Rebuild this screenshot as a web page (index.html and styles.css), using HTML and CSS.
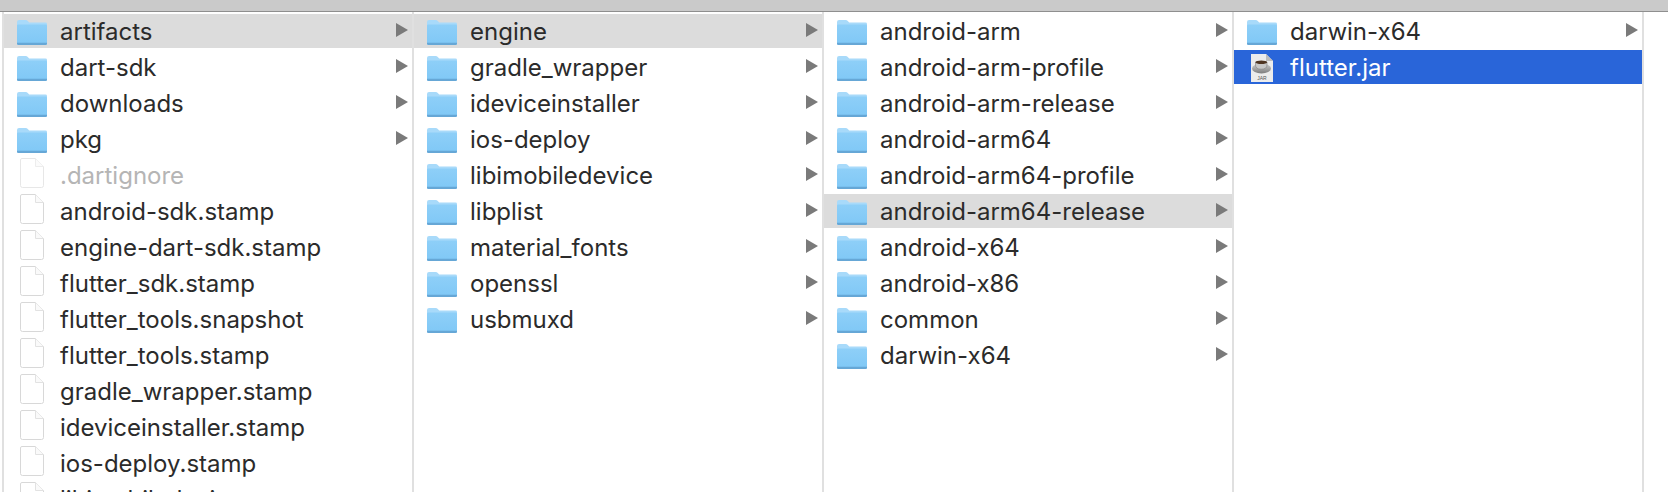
FILE: index.html
```html
<!DOCTYPE html>
<html lang="en">
<head>
<meta charset="utf-8">
<title>Finder columns</title>
<link rel="stylesheet" href="styles.css">
</head>
<body>
<svg class="defs" width="0" height="0" aria-hidden="true">
  <defs>
    <linearGradient id="fb" x1="0" y1="0" x2="0" y2="1">
      <stop offset="0" stop-color="#8ecff8"/>
      <stop offset="1" stop-color="#80c8f6"/>
    </linearGradient>
    <linearGradient id="saucer" x1="0" y1="0" x2="0" y2="1">
      <stop offset="0" stop-color="#cfcfcf"/>
      <stop offset="1" stop-color="#7d7d7d"/>
    </linearGradient>
    <symbol id="folder" viewBox="0 0 30 25">
      <path d="M0 2Q0 0 2 0H8.500Q10 0 11 1.200L12.200 2.600H28.500Q30 2.600 30 4V23.500Q30 25 28.500 25H1.500Q0 25 0 23.500Z" fill="#a8dafa"/>
      <path d="M0 5.500Q0 4.500 1 4.500H29Q30 4.500 30 5.500V23Q30 24 29 24H1Q0 24 0 23Z" fill="url(#fb)"/>
      <path d="M0 22.700V23.500Q0 25 1.500 25H28.500Q30 25 30 23.500V22.700Z" fill="#66a7d6"/>
    </symbol>
    <symbol id="file" viewBox="0 0 24 30">
      <path d="M2 .5H15.500L23.500 8.500V27.500Q23.500 29.500 21.500 29.500H2.500Q.5 29.500 .5 27.500V2Q.5 .5 2 .5Z" fill="#fff" stroke="#d8d8d8"/>
      <path d="M15.500 .5V8.500H23.500" fill="#fafafa" stroke="#e2e2e2"/>
    </symbol>
    <symbol id="jar" viewBox="0 0 22 28">
      <path d="M0 0H15L22 7V28H0Z" fill="#ececec"/>
      <path d="M15 0V7H22Z" fill="#bdbdbd"/>
      <ellipse cx="10.500" cy="14.500" rx="9.500" ry="5" fill="url(#saucer)"/>
      <path d="M4.500 8H16V11Q16 15.200 10.300 15.200Q4.500 15.200 4.500 11Z" fill="#c8c8c8" stroke="#7f7f7f" stroke-width=".6"/>
      <ellipse cx="10.300" cy="8.200" rx="5.800" ry="1.700" fill="#4f3522"/>
      <text x="11" y="26" text-anchor="middle" class="jar-label">JAR</text>
    </symbol>
    <symbol id="arrow" viewBox="0 0 12 14">
      <path d="M0 0L12 7L0 14Z" fill="#7a7a7a"/>
    </symbol>
  </defs>
</svg>
<div class="titlebar"></div>
<main class="browser">
  <section class="column">
    <div class="row active"><span class="slot"><svg class="folder"><use href="#folder"/></svg></span><span class="name">artifacts</span><svg class="arrow"><use href="#arrow"/></svg></div>
    <div class="row"><span class="slot"><svg class="folder"><use href="#folder"/></svg></span><span class="name">dart-sdk</span><svg class="arrow"><use href="#arrow"/></svg></div>
    <div class="row"><span class="slot"><svg class="folder"><use href="#folder"/></svg></span><span class="name">downloads</span><svg class="arrow"><use href="#arrow"/></svg></div>
    <div class="row"><span class="slot"><svg class="folder"><use href="#folder"/></svg></span><span class="name">pkg</span><svg class="arrow"><use href="#arrow"/></svg></div>
    <div class="row hidden-file"><span class="slot"><svg class="file"><use href="#file"/></svg></span><span class="name">.dartignore</span></div>
    <div class="row"><span class="slot"><svg class="file"><use href="#file"/></svg></span><span class="name">android-sdk.stamp</span></div>
    <div class="row"><span class="slot"><svg class="file"><use href="#file"/></svg></span><span class="name">engine-dart-sdk.stamp</span></div>
    <div class="row"><span class="slot"><svg class="file"><use href="#file"/></svg></span><span class="name">flutter_sdk.stamp</span></div>
    <div class="row"><span class="slot"><svg class="file"><use href="#file"/></svg></span><span class="name">flutter_tools.snapshot</span></div>
    <div class="row"><span class="slot"><svg class="file"><use href="#file"/></svg></span><span class="name">flutter_tools.stamp</span></div>
    <div class="row"><span class="slot"><svg class="file"><use href="#file"/></svg></span><span class="name">gradle_wrapper.stamp</span></div>
    <div class="row"><span class="slot"><svg class="file"><use href="#file"/></svg></span><span class="name">ideviceinstaller.stamp</span></div>
    <div class="row"><span class="slot"><svg class="file"><use href="#file"/></svg></span><span class="name">ios-deploy.stamp</span></div>
    <div class="row"><span class="slot"><svg class="file"><use href="#file"/></svg></span><span class="name">libimobiledevice.stamp</span></div>
  </section>
  <section class="column">
    <div class="row active"><span class="slot"><svg class="folder"><use href="#folder"/></svg></span><span class="name">engine</span><svg class="arrow"><use href="#arrow"/></svg></div>
    <div class="row"><span class="slot"><svg class="folder"><use href="#folder"/></svg></span><span class="name">gradle_wrapper</span><svg class="arrow"><use href="#arrow"/></svg></div>
    <div class="row"><span class="slot"><svg class="folder"><use href="#folder"/></svg></span><span class="name">ideviceinstaller</span><svg class="arrow"><use href="#arrow"/></svg></div>
    <div class="row"><span class="slot"><svg class="folder"><use href="#folder"/></svg></span><span class="name">ios-deploy</span><svg class="arrow"><use href="#arrow"/></svg></div>
    <div class="row"><span class="slot"><svg class="folder"><use href="#folder"/></svg></span><span class="name">libimobiledevice</span><svg class="arrow"><use href="#arrow"/></svg></div>
    <div class="row"><span class="slot"><svg class="folder"><use href="#folder"/></svg></span><span class="name">libplist</span><svg class="arrow"><use href="#arrow"/></svg></div>
    <div class="row"><span class="slot"><svg class="folder"><use href="#folder"/></svg></span><span class="name">material_fonts</span><svg class="arrow"><use href="#arrow"/></svg></div>
    <div class="row"><span class="slot"><svg class="folder"><use href="#folder"/></svg></span><span class="name">openssl</span><svg class="arrow"><use href="#arrow"/></svg></div>
    <div class="row"><span class="slot"><svg class="folder"><use href="#folder"/></svg></span><span class="name">usbmuxd</span><svg class="arrow"><use href="#arrow"/></svg></div>
  </section>
  <section class="column">
    <div class="row"><span class="slot"><svg class="folder"><use href="#folder"/></svg></span><span class="name">android-arm</span><svg class="arrow"><use href="#arrow"/></svg></div>
    <div class="row"><span class="slot"><svg class="folder"><use href="#folder"/></svg></span><span class="name">android-arm-profile</span><svg class="arrow"><use href="#arrow"/></svg></div>
    <div class="row"><span class="slot"><svg class="folder"><use href="#folder"/></svg></span><span class="name">android-arm-release</span><svg class="arrow"><use href="#arrow"/></svg></div>
    <div class="row"><span class="slot"><svg class="folder"><use href="#folder"/></svg></span><span class="name">android-arm64</span><svg class="arrow"><use href="#arrow"/></svg></div>
    <div class="row"><span class="slot"><svg class="folder"><use href="#folder"/></svg></span><span class="name">android-arm64-profile</span><svg class="arrow"><use href="#arrow"/></svg></div>
    <div class="row active"><span class="slot"><svg class="folder"><use href="#folder"/></svg></span><span class="name">android-arm64-release</span><svg class="arrow"><use href="#arrow"/></svg></div>
    <div class="row"><span class="slot"><svg class="folder"><use href="#folder"/></svg></span><span class="name">android-x64</span><svg class="arrow"><use href="#arrow"/></svg></div>
    <div class="row"><span class="slot"><svg class="folder"><use href="#folder"/></svg></span><span class="name">android-x86</span><svg class="arrow"><use href="#arrow"/></svg></div>
    <div class="row"><span class="slot"><svg class="folder"><use href="#folder"/></svg></span><span class="name">common</span><svg class="arrow"><use href="#arrow"/></svg></div>
    <div class="row"><span class="slot"><svg class="folder"><use href="#folder"/></svg></span><span class="name">darwin-x64</span><svg class="arrow"><use href="#arrow"/></svg></div>
  </section>
  <section class="column">
    <div class="row"><span class="slot"><svg class="folder"><use href="#folder"/></svg></span><span class="name">darwin-x64</span><svg class="arrow"><use href="#arrow"/></svg></div>
    <div class="row selected"><span class="slot"><svg class="jar"><use href="#jar"/></svg></span><span class="name">flutter.jar</span></div>
  </section>
</main>
</body>
</html>
```
FILE: styles.css
```css
html, body {
  margin: 0;
  height: 100%;
  overflow: hidden;
  background: #fff;
}
.defs {
  position: absolute;
}
.titlebar {
  height: 11px;
  background: #cacaca;
  border-bottom: 1px solid #8f8f8f;
}
.browser {
  display: flex;
  padding-left: 2px;
  height: 480px;
  overflow: hidden;
  font-family: Inter, "Liberation Sans", sans-serif;
  font-size: 24px;
  color: #2b2b2b;
}
.column {
  flex: none;
  box-sizing: border-box;
  width: 410px;
  padding-top: 2px;
  border-right: 2px solid #e0e0e0;
}
.column:first-child {
  width: 412px;
  border-left: 2px solid #e0e0e0;
}
.row {
  display: flex;
  align-items: center;
  height: 34px;
  margin-bottom: 2px;
}
.row.active {
  background: #dcdcdc;
}
.row.selected {
  background: #2965d9;
  color: #fff;
}
.hidden-file {
  color: #b5b5b5;
}
.hidden-file .file {
  opacity: .6;
}
.slot {
  flex: none;
  display: flex;
  width: 56px;
}
.folder {
  width: 30px;
  height: 25px;
  margin: 3px 0 0 13px;
}
.file {
  width: 24px;
  height: 30px;
  margin: 0 0 4px 16px;
}
.jar {
  width: 22px;
  height: 28px;
  margin: 2px 0 0 17px;
}
.jar-label {
  font-family: "Liberation Sans", sans-serif;
  font-size: 5px;
  fill: #555;
}
.name {
  white-space: nowrap;
}
.arrow {
  width: 12px;
  height: 14px;
  margin: 0 4px 2px auto;
}
```
